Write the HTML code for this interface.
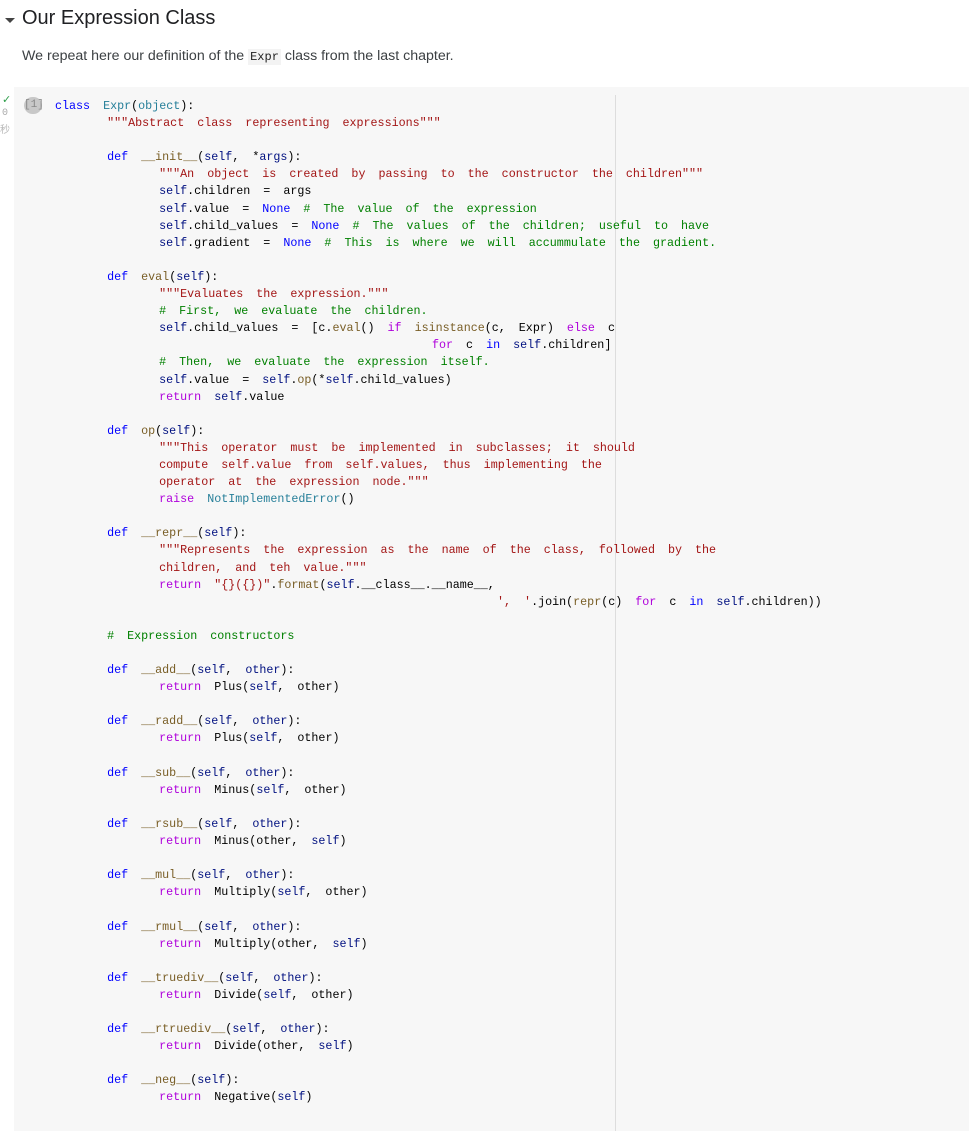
<!DOCTYPE html>
<html><head><meta charset="utf-8">
<style>
html,body{margin:0;padding:0;background:#fff;width:969px;height:1136px;overflow:hidden;position:relative;font-family:"Liberation Sans",sans-serif;}
.h{position:absolute;left:22px;top:7px;font-size:20px;color:#202124;}
.arrow{position:absolute;left:5px;top:18px;width:0;height:0;border-left:5px solid transparent;border-right:5px solid transparent;border-top:5px solid #444;}
.p{position:absolute;left:22px;top:48px;font-size:14.2px;color:#3c4043;}
.p code{font-family:"Liberation Mono",monospace;font-size:12px;background:#f3f3f3;padding:1px 2px;color:#222;}
.cell{position:absolute;left:14px;top:87px;width:955px;height:1044px;background:#f7f7f7;}
.ruler{position:absolute;left:615px;top:95px;width:1px;height:1036px;background:#ddd;}
.chk{position:absolute;left:2px;top:93px;color:#2e9e4a;font-size:11px;}
.z{position:absolute;left:2px;top:108px;color:#aaa;font-size:10px;font-family:"Liberation Mono",monospace;}
.s{position:absolute;left:0px;top:121px;color:#bbb;font-size:10px;font-family:"Noto Sans CJK SC",sans-serif;}
.num{position:absolute;left:24px;top:97px;width:18px;height:17px;border-radius:9px;background:#c8c8c8;color:#888;font-size:11px;text-align:center;line-height:17px;font-family:"Liberation Mono",monospace;}
pre{position:absolute;left:55px;top:98px;margin:0;font-family:"Liberation Mono",monospace;font-size:11.7px;line-height:17.1px;word-spacing:6px;color:#000;}
.k{color:#0000ff}.f{color:#795e26}.sf{color:#001080}.st{color:#a31515}.c{color:#008000}.r{color:#af00db}.t{color:#267f99}
</style></head><body>
<div class="arrow"></div>
<div class="h">Our Expression Class</div>
<div class="p">We repeat here our definition of the <code>Expr</code> class from the last chapter.</div>
<div class="cell"></div>
<div class="ruler"></div>
<div class="chk">✓</div><div class="z">0</div><div class="s">秒</div>
<div class="num">[1]</div>
<pre><span class="k">class</span> <span class="t">Expr</span>(<span class="t">object</span>):
    <span class="st">"""Abstract class representing expressions"""</span>

    <span class="k">def</span> <span class="f">__init__</span>(<span class="sf">self</span>, *<span class="sf">args</span>):
        <span class="st">"""An object is created by passing to the constructor the children"""</span>
        <span class="sf">self</span>.children = args
        <span class="sf">self</span>.value = <span class="k">None</span> <span class="c"># The value of the expression</span>
        <span class="sf">self</span>.child_values = <span class="k">None</span> <span class="c"># The values of the children; useful to have</span>
        <span class="sf">self</span>.gradient = <span class="k">None</span> <span class="c"># This is where we will accummulate the gradient.</span>

    <span class="k">def</span> <span class="f">eval</span>(<span class="sf">self</span>):
        <span class="st">"""Evaluates the expression."""</span>
        <span class="c"># First, we evaluate the children.</span>
        <span class="sf">self</span>.child_values = [c.<span class="f">eval</span>() <span class="r">if</span> <span class="f">isinstance</span>(c, Expr) <span class="r">else</span> c
<span style="display:inline-block;width:377px"></span><span class="r">for</span> c <span class="k">in</span> <span class="sf">self</span>.children]
        <span class="c"># Then, we evaluate the expression itself.</span>
        <span class="sf">self</span>.value = <span class="sf">self</span>.<span class="f">op</span>(*<span class="sf">self</span>.child_values)
        <span class="r">return</span> <span class="sf">self</span>.value

    <span class="k">def</span> <span class="f">op</span>(<span class="sf">self</span>):
        <span class="st">"""This operator must be implemented in subclasses; it should</span>
<span class="st">        compute self.value from self.values, thus implementing the</span>
<span class="st">        operator at the expression node."""</span>
        <span class="r">raise</span> <span class="t">NotImplementedError</span>()

    <span class="k">def</span> <span class="f">__repr__</span>(<span class="sf">self</span>):
        <span class="st">"""Represents the expression as the name of the class, followed by the</span>
<span class="st">        children, and teh value."""</span>
        <span class="r">return</span> <span class="st">"{}({})"</span>.<span class="f">format</span>(<span class="sf">self</span>.__class__.__name__,
<span style="display:inline-block;width:442px"></span><span class="st">', '</span>.join(<span class="f">repr</span>(c) <span class="r">for</span> c <span class="k">in</span> <span class="sf">self</span>.children))

    <span class="c"># Expression constructors</span>

    <span class="k">def</span> <span class="f">__add__</span>(<span class="sf">self</span>, <span class="sf">other</span>):
        <span class="r">return</span> Plus(<span class="sf">self</span>, other)

    <span class="k">def</span> <span class="f">__radd__</span>(<span class="sf">self</span>, <span class="sf">other</span>):
        <span class="r">return</span> Plus(<span class="sf">self</span>, other)

    <span class="k">def</span> <span class="f">__sub__</span>(<span class="sf">self</span>, <span class="sf">other</span>):
        <span class="r">return</span> Minus(<span class="sf">self</span>, other)

    <span class="k">def</span> <span class="f">__rsub__</span>(<span class="sf">self</span>, <span class="sf">other</span>):
        <span class="r">return</span> Minus(other, <span class="sf">self</span>)

    <span class="k">def</span> <span class="f">__mul__</span>(<span class="sf">self</span>, <span class="sf">other</span>):
        <span class="r">return</span> Multiply(<span class="sf">self</span>, other)

    <span class="k">def</span> <span class="f">__rmul__</span>(<span class="sf">self</span>, <span class="sf">other</span>):
        <span class="r">return</span> Multiply(other, <span class="sf">self</span>)

    <span class="k">def</span> <span class="f">__truediv__</span>(<span class="sf">self</span>, <span class="sf">other</span>):
        <span class="r">return</span> Divide(<span class="sf">self</span>, other)

    <span class="k">def</span> <span class="f">__rtruediv__</span>(<span class="sf">self</span>, <span class="sf">other</span>):
        <span class="r">return</span> Divide(other, <span class="sf">self</span>)

    <span class="k">def</span> <span class="f">__neg__</span>(<span class="sf">self</span>):
        <span class="r">return</span> Negative(<span class="sf">self</span>)</pre>
</body></html>
